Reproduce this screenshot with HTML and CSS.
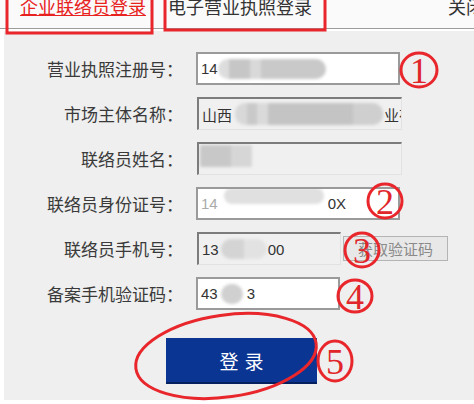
FILE: index.html
```html
<!DOCTYPE html>
<html lang="zh-CN">
<head>
  <meta charset="UTF-8" />
  <title>企业联络员登录</title>
  <link rel="stylesheet" href="styles.css">
</head>
<body>
  <div class="page">
    <div class="tabs">
      <a class="tab active">企业联络员登录</a>
      <a class="tab">电子营业执照登录</a>
      <span class="close">关闭</span>
    </div>

    <div class="panel">
      <div class="form">
        <div class="row">
          <label>营业执照注册号：</label>
          <div class="field">14<span class="blur blur-reg"></span></div>
        </div>
        <div class="row">
          <label>市场主体名称：</label>
          <div class="field disabled">山西<span class="blur blur-name"></span>业有限公司</div>
        </div>
        <div class="row">
          <label>联络员姓名：</label>
          <div class="field disabled"><span class="blur blur-person"></span></div>
        </div>
        <div class="row">
          <label>联络员身份证号：</label>
          <div class="field"><span class="faded">14</span><span class="blur blur-id"></span>0X</div>
        </div>
        <div class="row">
          <label>联络员手机号：</label>
          <div class="field disabled short">13<span class="blur blur-phone"></span>00</div>
          <button class="sms">获取验证码</button>
        </div>
        <div class="row">
          <label>备案手机验证码：</label>
          <div class="field short">43<span class="blur blur-code"></span>3</div>
        </div>
      </div>
      <button class="login">登录</button>
    </div>

    <!-- red annotation marks drawn over the screenshot -->
    <svg class="marks" width="474" height="404" viewBox="0 0 474 404">
      <rect x="7" y="-4" width="145" height="37" />
      <rect x="165" y="-4" width="160" height="34" />
      <ellipse cx="226" cy="356" rx="91" ry="41" transform="rotate(-8 226 356)" />
      <g class="num">
        <ellipse cx="419" cy="70" rx="18" ry="17" />
        <text x="419" y="71">1</text>
        <ellipse cx="385" cy="201" rx="17" ry="17" />
        <text x="385" y="202">2</text>
        <ellipse cx="362" cy="250" rx="17" ry="17" />
        <text x="362" y="251">3</text>
        <ellipse cx="355" cy="296" rx="17" ry="16" />
        <text x="355" y="297">4</text>
        <ellipse cx="335" cy="361" rx="17" ry="20" />
        <text x="335" y="362">5</text>
      </g>
    </svg>
  </div>
</body>
</html>
```

FILE: styles.css
```css
html, body { margin: 0; padding: 0; background: #fff; }
body { font-family: "Noto Sans CJK SC", "Noto Sans", sans-serif; color: #333; }
.page { position: relative; width: 474px; height: 404px; overflow: hidden; }

.tabs { display: flex; height: 28px; border-bottom: 1px solid #9c9c9c; background: #fafafa; white-space: nowrap; }
.tab { flex-shrink: 0; font-size: 18px; line-height: 18px; margin-top: -3px; color: #333; }
.tab.active { color: #e8231f; text-decoration: underline; margin-left: 20px; }
.tab + .tab { margin-left: 22px; }
.close { flex-shrink: 0; font-size: 18px; line-height: 18px; margin-top: -3px; margin-left: 136px; color: #333; }

.panel { margin: 2px 0 0 4px; padding: 21px 0 16px; background: #eeefee; }
.form { display: flex; flex-direction: column; gap: 12px; }
.row { display: flex; align-items: center; height: 33px; }
.row label { width: 179px; margin-right: 13px; text-align: right; font-size: 17px; color: #3a3a3a; }

.field { box-sizing: border-box; width: 204px; height: 33px; padding: 0 3px; display: flex; align-items: center;
  background: #fff; border: 2px solid #9a9a9a; font-family: "Liberation Sans", "Noto Sans CJK SC", sans-serif;
  font-size: 15px; color: #333; white-space: nowrap; overflow: hidden; }
.field.disabled { width: 205px; margin-left: 1px; background: #f0f0f0; border-top: 2px solid #7c7c7c; border-left: 2px solid #7c7c7c;
  border-right: 1px solid #e2e2e2; border-bottom: 1px solid #e2e2e2; }
.field.short { width: 144px; }
.faded { color: #aaa; }

.blur { display: inline-block; flex-shrink: 0; height: 20px; border-radius: 10px; filter: blur(1.5px); }
.blur-reg { width: 108px; margin-left: 0;
  background: linear-gradient(90deg, #ddd 0 10%, #c6c6c6 10% 30%, #d9d9d9 30% 40%, #c9c9c9 40% 100%); }
.blur-name { width: 148px; height: 22px; margin: 0 1px 0 3px;
  background: linear-gradient(90deg, #d8d8d8 0 8%, #c9c9c9 8% 15%, #dadada 15% 22%, #c4c4c4 22% 80%, #cfcfcf 80% 100%); }
.blur-person { width: 52px; height: 22px; margin-top: -6px; margin-left: -2px; border-radius: 2px;
  background: linear-gradient(90deg, #c8c8c8 0 60%, #d6d6d6 60% 100%); }
.blur-id { width: 100px; height: 16px; margin: -16px 4px 0 6px; background: #e0e0e0; }
.blur-phone { width: 46px; margin: 0 1px 0 2px; background: linear-gradient(90deg, #d4d4d4 0 50%, #e2e2e2 50% 100%); }
.blur-code { width: 22px; margin: 0 4px 0 3px; background: #d0d0d0; }

.sms { box-sizing: border-box; width: 105px; height: 25px; margin-left: 2px; padding: 0;
  background: #e8e8e8; border: 1px solid #b4b4b4; color: #8a8a8a; font-family: "Noto Sans CJK SC", sans-serif; font-size: 15px; }

.login { display: block; box-sizing: border-box; width: 151px; height: 46px; margin: 28px 0 0 162px; padding: 0;
  background: #0b3593; border: none; border-bottom: 2px solid #061f5e; color: #fff;
  font-family: "Noto Sans CJK SC", sans-serif; font-size: 19px; letter-spacing: 6px; text-indent: 6px; }

.marks { position: absolute; left: 0; top: 0; pointer-events: none; }
.marks rect, .marks ellipse { fill: none; stroke: #e8262b; stroke-width: 3; }
.num ellipse { stroke-width: 3; }
.num text { fill: #e0262a; font-family: "Liberation Serif", serif; font-size: 36px; text-anchor: middle; dominant-baseline: central; }
```
